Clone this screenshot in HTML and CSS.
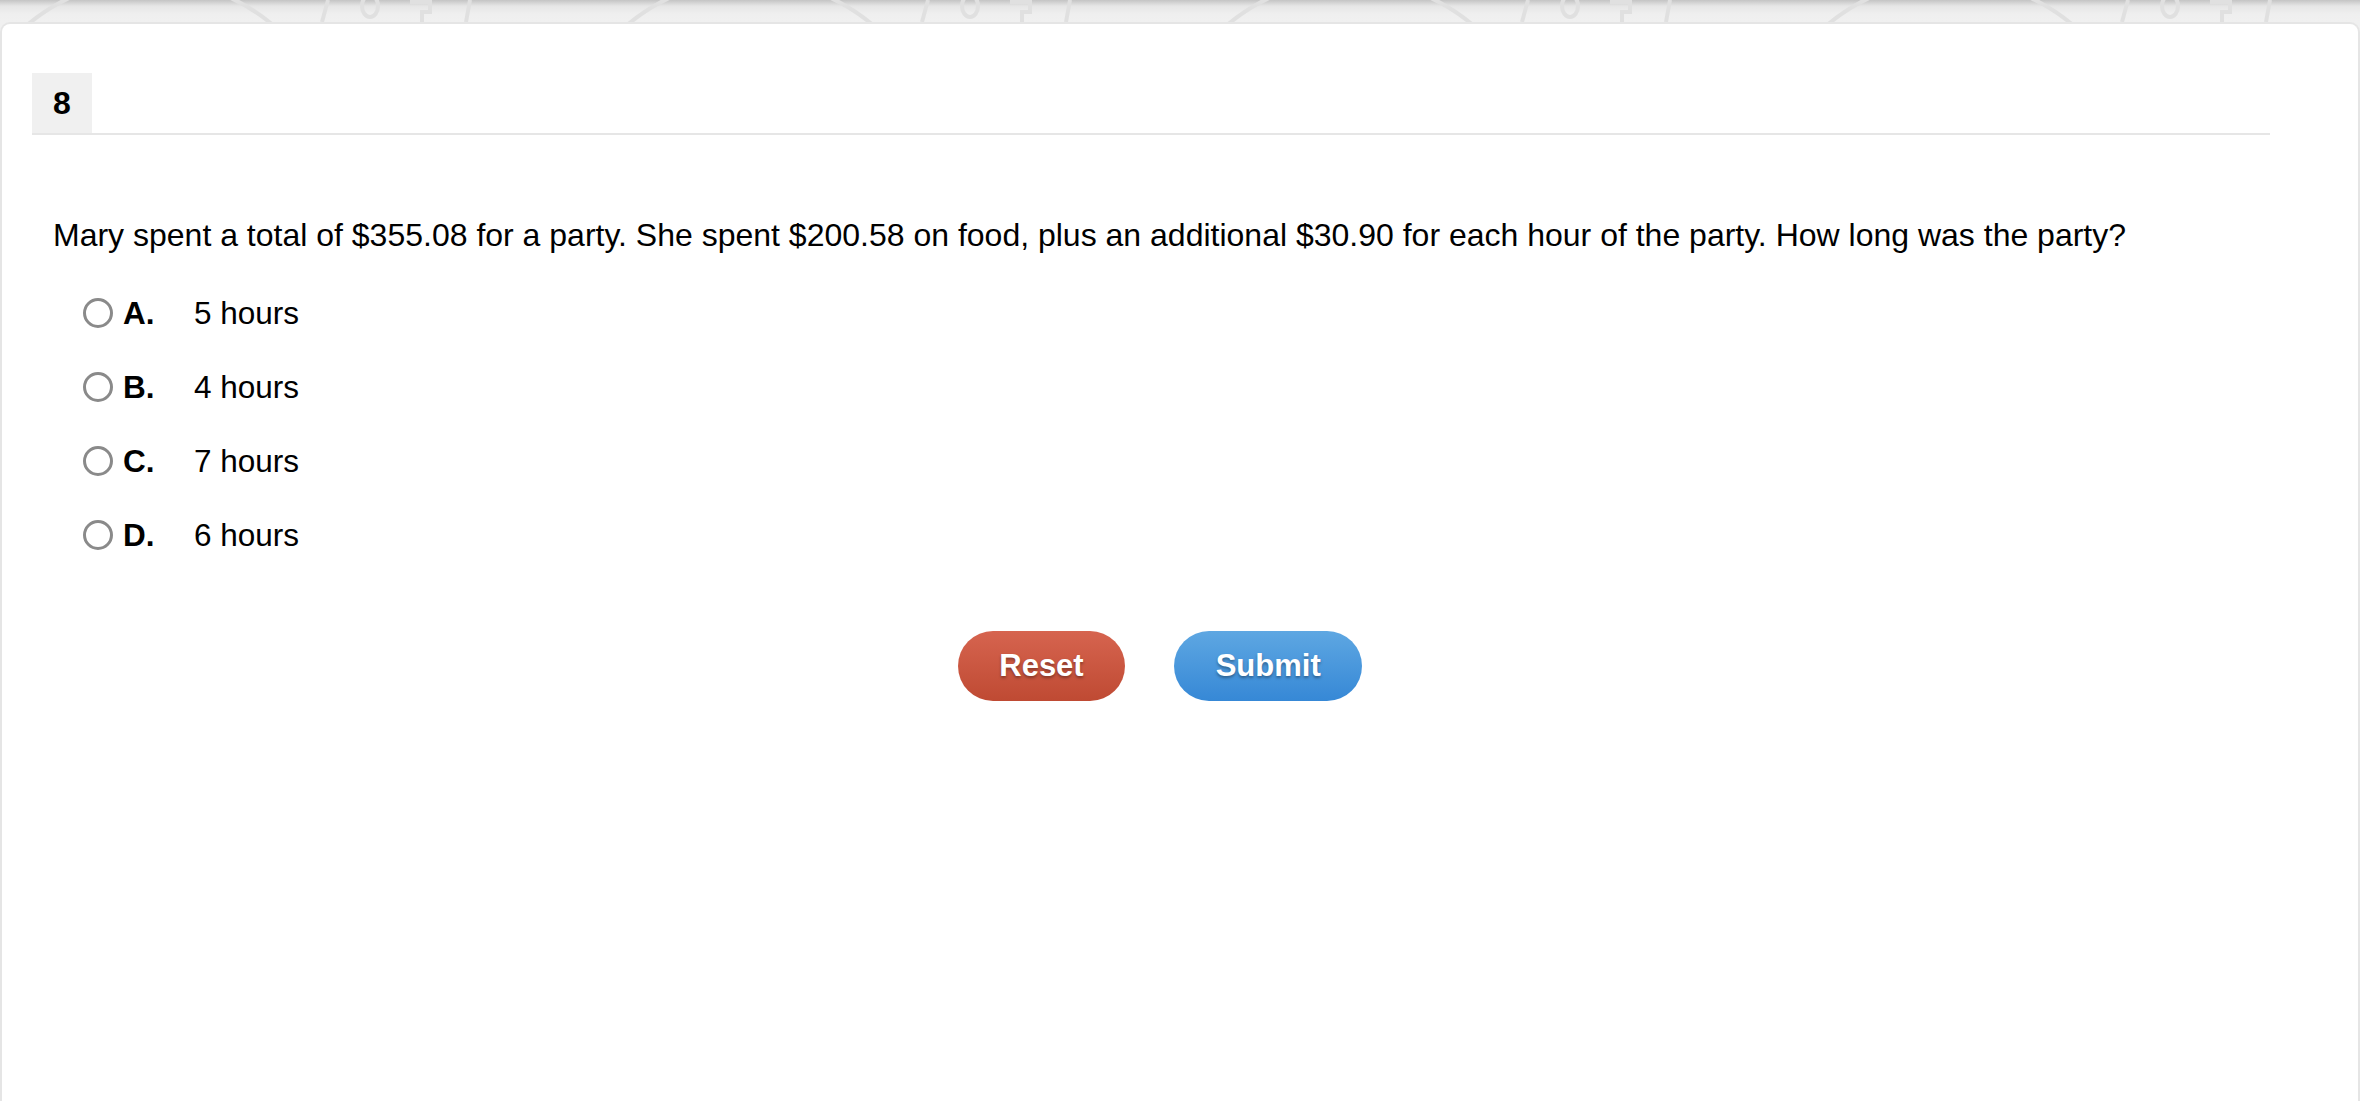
FILE: index.html
```html
<!DOCTYPE html>
<html lang="en">
<head>
  <meta charset="UTF-8">
  <meta name="viewport" content="width=device-width, initial-scale=1.0">
  <title>Question 8</title>
  <link rel="stylesheet" href="styles.css">
</head>

<body>
  <!-- Fascia di sfondo con motivo -->
  <div class="backdrop">
    <svg class="pattern" width="2360" height="22" viewBox="0 0 2360 22">
      <g fill="none" stroke="#e0e0e0" stroke-width="4">
        <circle cx="150" cy="170" r="190"/>
        <circle cx="750" cy="170" r="190"/>
        <circle cx="1350" cy="170" r="190"/>
        <circle cx="1950" cy="170" r="190"/>
        <path d="M328 0 L322 22 M470 0 L466 22 M928 0 L922 22 M1070 0 L1066 22 M1528 0 L1522 22 M1670 0 L1666 22 M2128 0 L2122 22 M2270 0 L2266 22"/>
        <ellipse cx="370" cy="6" rx="8" ry="11"/>
        <ellipse cx="970" cy="6" rx="8" ry="11"/>
        <ellipse cx="1570" cy="6" rx="8" ry="11"/>
        <ellipse cx="2170" cy="6" rx="8" ry="11"/>
        <path d="M410 2 h20 v10 h-8 v10 M1010 2 h20 v10 h-8 v10 M1610 2 h20 v10 h-8 v10 M2210 2 h20 v10 h-8 v10"/>
      </g>
    </svg>
  </div>

  <div class="card">
    <div class="card-header">
      <span class="q-number">8</span>
    </div>

    <p class="question">Mary spent a total of $355.08 for a party. She spent $200.58 on food, plus an additional $30.90 for each hour of the party. How long was the party?</p>

    <ul class="choices">
      <li class="choice"><label><input type="radio" name="answer" value="A"><span class="letter">A.</span><span>5 hours</span></label></li>
      <li class="choice"><label><input type="radio" name="answer" value="B"><span class="letter">B.</span><span>4 hours</span></label></li>
      <li class="choice"><label><input type="radio" name="answer" value="C"><span class="letter">C.</span><span>7 hours</span></label></li>
      <li class="choice"><label><input type="radio" name="answer" value="D"><span class="letter">D.</span><span>6 hours</span></label></li>
    </ul>

    <div class="actions">
      <button type="button" class="btn btn-reset">Reset</button>
      <button type="button" class="btn btn-submit">Submit</button>
    </div>
  </div>
</body>
</html>
```

FILE: styles.css
```css
/* Stile generale */
body {
  font-family: "Liberation Sans", Arial, sans-serif;
  color: #000;
  background-color: #f0f0f0;
  margin: 0;
  overflow: hidden;
}

.backdrop {
  height: 22px;
  overflow: hidden;
  background: linear-gradient(#c4c4c4 0, #e6e6e6 6px, #efefef 14px, #f0f0f0 22px);
}

.pattern {
  display: block;
}

/* Scheda della domanda */
.card {
  background-color: #fff;
  border: 2px solid #e5e5e5;
  border-bottom: none;
  border-radius: 10px 10px 0 0;
  height: 1120px;
  padding: 0 88px 0 30px;
}

.card-header {
  margin-top: 49px;
  border-bottom: 2px solid #e6e6e6;
  display: flex;
}

.q-number {
  background-color: #f0f0f0;
  font-size: 32px;
  font-weight: bold;
  line-height: 60px;
  padding: 0 21px;
}

/* Testo della domanda */
.question {
  font-size: 32px;
  line-height: 38px;
  margin: 81px 0 0 0;
  padding-left: 21px;
}

/* Risposte */
.choices {
  list-style: none;
  margin: 22px 0 0 0;
  padding: 0 0 0 51px;
}

.choice label {
  display: flex;
  align-items: center;
  height: 74px;
  font-size: 31.5px;
  cursor: pointer;
}

.choice input[type="radio"] {
  appearance: none;
  width: 30px;
  height: 30px;
  margin: 0 10px 0 0;
  border: 3px solid #8a8a8a;
  border-radius: 50%;
  background-color: #fff;
}

.choice input[type="radio"]:checked {
  background: radial-gradient(#3a8ad8 40%, #fff 45%);
}

.letter {
  font-weight: bold;
  width: 71px;
}

/* Pulsanti */
.actions {
  display: flex;
  justify-content: center;
  gap: 49px;
  margin-top: 59px;
  padding-left: 18px;
}

.btn {
  font-family: "Liberation Sans", Arial, sans-serif;
  font-size: 31px;
  font-weight: bold;
  color: #fff;
  height: 70px;
  line-height: 70px;
  padding: 0 41.5px;
  border: none;
  border-radius: 35px;
  text-shadow: 0 2px 3px rgba(0, 0, 0, 0.35);
  cursor: pointer;
}

.btn-reset {
  background: linear-gradient(#d6644f, #bf4a33);
}

.btn-submit {
  background: linear-gradient(#5ea7e2, #3688d6);
}
```
